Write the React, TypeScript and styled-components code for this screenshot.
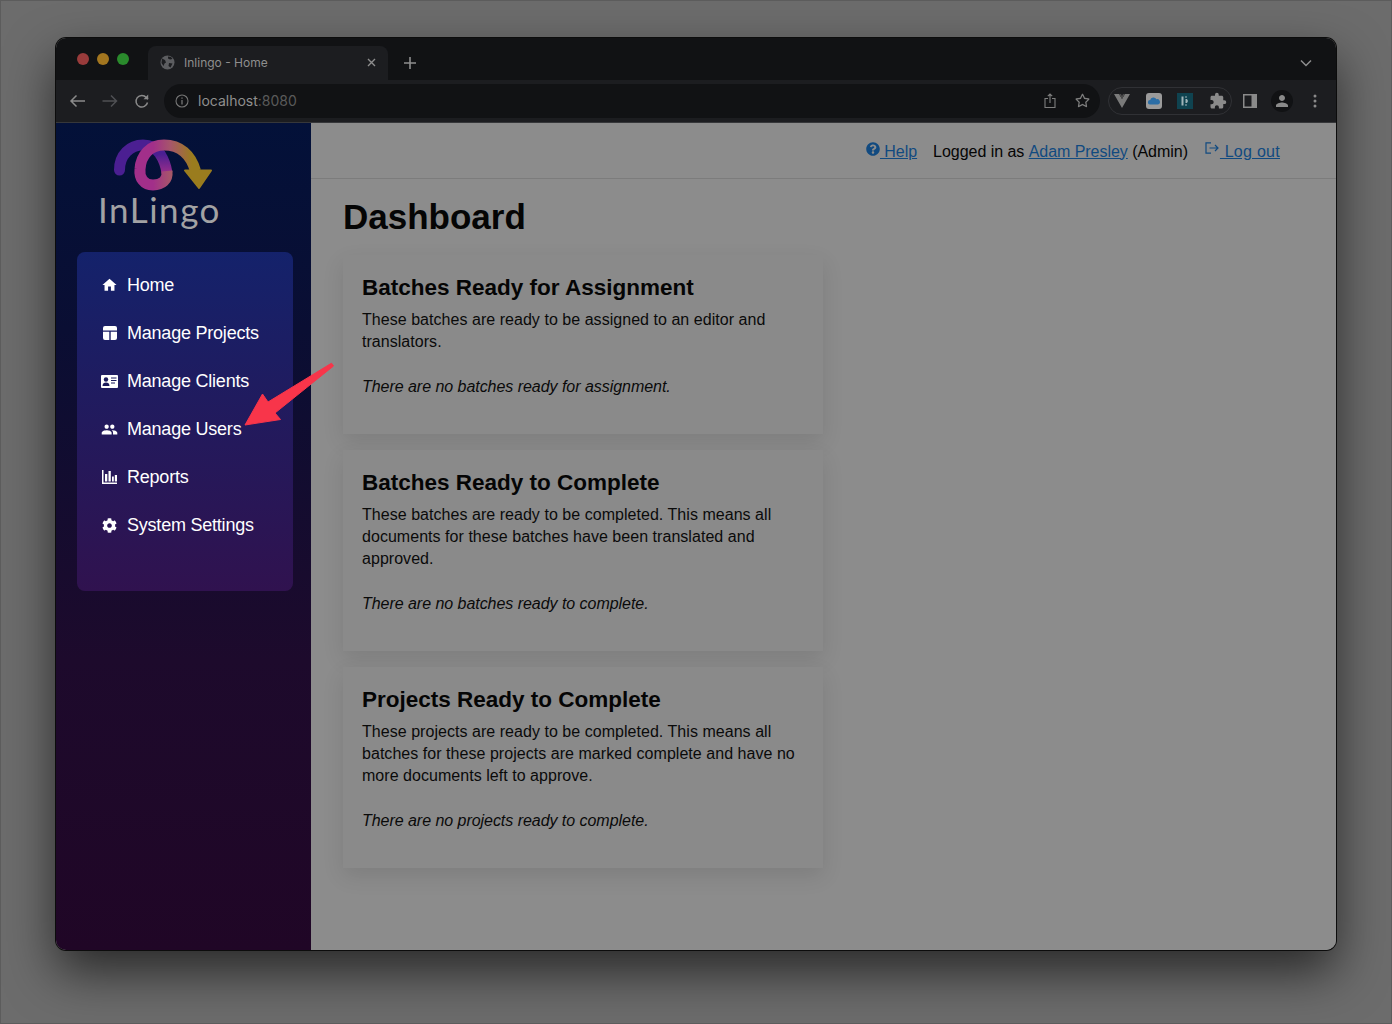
import React, { FC } from 'react';
import styled, { createGlobalStyle } from 'styled-components';
import { MdHome, MdPeople, MdExtension, MdPerson } from 'react-icons/md';
import { FaCog, FaQuestionCircle, FaRegStar } from 'react-icons/fa';

const GlobalStyle = createGlobalStyle`
  html, body { margin: 0; padding: 0; }
  body { font-family: "Liberation Sans", Arial, sans-serif; background: #6c6c6c; }
`;

const Page = styled.div`
  box-sizing: border-box;
  width: 1392px;
  height: 1024px;
  padding: 38px 56px 0;
  background: #6c6c6c;
  border: 1px solid #5c5c5c;
  overflow: hidden;
`;

const Window = styled.div`
  position: relative;
  margin: -1px 0 0 -1px;
  width: 1280px;
  height: 912px;
  display: flex;
  flex-direction: column;
  border-radius: 10px;
  overflow: hidden;
  background: #8c8c8c;
  box-shadow: 0 0 0 1px #0c0c0c, 0 22px 50px rgba(0, 0, 0, 0.62);
`;

const TabStrip = styled.div`
  height: 42px;
  flex: none;
  display: flex;
  align-items: flex-end;
  background: #111214;
`;

const Lights = styled.div`
  display: flex;
  gap: 8px;
  align-self: flex-start;
  margin: 15px 19px 0 21px;
`;

const Light = styled.span<{ $color: string }>`
  width: 12px;
  height: 12px;
  border-radius: 50%;
  background: ${p => p.$color};
`;

const Tab = styled.div`
  box-sizing: border-box;
  width: 240px;
  height: 34px;
  display: flex;
  align-items: center;
  padding: 0 12px 2px 12px;
  background: #1c1d20;
  border-radius: 8px 8px 0 0;
  color: #8e8e8e;
  font: 12px "Inter", "Liberation Sans", sans-serif;
`;

const TabTitle = styled.span`
  flex: 1;
  margin-left: 9px;
`;

const NewTab = styled.svg`
  margin: 0 0 10px 15px;
`;

const StripEnd = styled.svg`
  margin: 0 24px 13px auto;
`;

const Toolbar = styled.div`
  box-sizing: border-box;
  height: 43px;
  flex: none;
  display: flex;
  align-items: center;
  padding: 0 0 1px 13px;
  background: #1c1d20;
  border-bottom: 1px solid #36373a;
`;

const NavIcon = styled.svg<{ $left?: number; $right?: number }>`
  flex: none;
  margin-left: ${p => p.$left ?? 0}px;
  margin-right: ${p => p.$right ?? 10}px;
`;

const AddressBar = styled.div`
  box-sizing: border-box;
  width: 936px;
  height: 34px;
  margin-left: 2px;
  display: flex;
  align-items: center;
  padding: 0 10px 0 11px;
  border-radius: 17px;
  background: #111214;
  font: 14px "Inter", "Liberation Sans", sans-serif;
  color: #8f8f8f;
`;

const Url = styled.span`
  margin-left: 9px;
  flex: 1;
  span { color: #5a5a5a; }
`;

const BarIcons = styled.div`
  display: flex;
  align-items: center;
  gap: 19px;
  color: #7e7e7e;
`;

const ExtensionPill = styled.div`
  box-sizing: border-box;
  width: 124px;
  height: 28px;
  margin-left: 8px;
  display: flex;
  align-items: center;
  justify-content: space-between;
  padding: 0 4px 0 5px;
  border: 1px solid #303135;
  border-radius: 14px;
  color: #8a8a8a;
`;

const ToolbarEnd = styled.div`
  display: flex;
  align-items: center;
  margin-left: 11px;
  color: #8a8a8a;
`;

const Avatar = styled.span`
  width: 22px;
  height: 22px;
  margin: 0 20px 0 14px;
  display: flex;
  align-items: center;
  justify-content: center;
  border-radius: 50%;
  background: #111214;
`;

const Body = styled.div`
  flex: 1;
  display: flex;
  min-height: 0;
`;

const Sidebar = styled.aside`
  width: 255px;
  flex: none;
  padding-top: 14px;
  box-sizing: border-box;
  background: linear-gradient(180deg, #031139 0%, #0a0e33 25%, #1d0a2c 65%, #200626 100%);
`;

const Logo = styled.div`
  height: 115px;
  display: flex;
  flex-direction: column;
  margin-left: 43px;
`;

const LogoMark = styled.svg`
  margin-left: 9px;
  flex: none;
`;

const LogoText = styled.span`
  margin: -1px 0 0 -1px;
  font: 400 35px/38px "Lato", "Noto Sans", sans-serif;
  letter-spacing: 1.5px;
  color: #a2a2a4;
`;

const NavCard = styled.nav`
  margin: 0 18px 0 21px;
  padding: 9px 0 42px;
  border-radius: 8px;
  background: linear-gradient(180deg, #14226b 0%, #30124f 100%);
`;

const NavItem = styled.div`
  height: 48px;
  display: flex;
  align-items: center;
  padding-left: 24px;
  color: #fff;
  font-size: 18px;
  letter-spacing: -0.22px;
`;

const NavGlyph = styled.span`
  width: 17px;
  height: 17px;
  margin-right: 9px;
  display: flex;
  align-items: center;
  justify-content: center;
`;

const Content = styled.main`
  flex: 1;
  min-width: 0;
  background: #8c8c8c;
`;

const TopBar = styled.header`
  box-sizing: border-box;
  height: 56px;
  display: flex;
  align-items: center;
  justify-content: flex-end;
  padding: 2px 56px 0 0;
  border-bottom: 1px solid #7c7c7c;
  font-size: 16px;
  letter-spacing: -0.04px;
  color: #050505;
`;

const TopLink = styled.a`
  color: #114a80;
  text-decoration: underline;
`;

const LogoutLink = styled(TopLink)`
  letter-spacing: 0.28px;
`;

const TopGroup = styled.span<{ $gap?: number }>`
  margin-left: ${p => p.$gap ?? 0}px;
  display: inline-flex;
  align-items: center;
  white-space: pre;
`;

const TopIcon = styled.span`
  display: inline-flex;
  color: #114a80;
  margin-top: -6px;
`;

const Inner = styled.div`
  padding: 16px 0 0 32px;
`;

const PageTitle = styled.h1`
  margin: 0 0 15.5px;
  font-size: 35px;
  line-height: 44px;
  font-weight: 700;
  color: #050505;
`;

const CardStack = styled.div`
  width: 480px;
  display: flex;
  flex-direction: column;
  gap: 16px;
`;

const Card = styled.section`
  padding: 19px 19px 36px;
  background: #8a8a8a;
  box-shadow: 0 8px 20px rgba(0, 0, 0, 0.1);
  color: #0a0a0a;
`;

const CardTitle = styled.h2`
  margin: 0 0 7px;
  font-size: 22.5px;
  line-height: 28px;
  font-weight: 700;
  color: #050505;
`;

const CardText = styled.p<{ $empty?: boolean }>`
  margin: ${p => (p.$empty ? '23px 0 0' : '0')};
  font-size: 16px;
  line-height: 22px;
  letter-spacing: ${p => (p.$empty ? '-0.04px' : '0.04px')};
  font-style: ${p => (p.$empty ? 'italic' : 'normal')};
`;

const Pointer = styled.svg`
  position: absolute;
  left: 0;
  top: 0;
  pointer-events: none;
`;

const ProjectsIcon: FC = () => (
  <svg width="14" height="14" viewBox="0 0 14 14" fill="#fff">
    <path d="M2 0h10a2 2 0 0 1 2 2v2.500H0V2a2 2 0 0 1 2-2zM0 5.700h6.300V14H2a2 2 0 0 1-2-2zM7.700 5.700H14V12a2 2 0 0 1-2 2H7.700z" />
  </svg>
);

const ClientsIcon: FC = () => (
  <svg width="17" height="13" viewBox="0 0 17 13">
    <rect width="17" height="13" rx="1" fill="#fff" />
    <circle cx="5" cy="4.500" r="2.200" fill="#1b1a5c" />
    <path d="M1.500 11c0-2.500 1.500-3.500 3.500-3.500S8.500 8.500 8.500 11z" fill="#1b1a5c" />
    <path d="M10 3h5.500M10 5.500h5.500M10 8h4" stroke="#1b1a5c" strokeWidth="1" />
  </svg>
);

const ReportsIcon: FC = () => (
  <svg width="15" height="14" viewBox="0 0 15 14" fill="#fff">
    <path d="M0 0h1.500v12.500H15V14H0zM3 4h2.300v7.500H3zM6.500 1h2.300v10.500H6.500zM10 6.500h1.800v5H10zM12.800 5H15v6.500h-2.200z" />
  </svg>
);

const LogoutIcon: FC = () => (
  <svg width="15" height="13" viewBox="0 0 15 13" fill="none" stroke="#114a80" strokeWidth="1.200">
    <path d="M6 0.800H1v10.400h5M4.500 6h8.500M10 3l3 3-3 3" />
  </svg>
);

const navItems = [
  { label: 'Home', icon: <MdHome size={18} /> },
  { label: 'Manage Projects', icon: <ProjectsIcon /> },
  { label: 'Manage Clients', icon: <ClientsIcon /> },
  { label: 'Manage Users', icon: <MdPeople size={17} /> },
  { label: 'Reports', icon: <ReportsIcon /> },
  { label: 'System Settings', icon: <FaCog size={15} /> },
];

const cards = [
  {
    title: 'Batches Ready for Assignment',
    text: 'These batches are ready to be assigned to an editor and translators.',
    empty: 'There are no batches ready for assignment.',
  },
  {
    title: 'Batches Ready to Complete',
    text: 'These batches are ready to be completed. This means all documents for these batches have been translated and approved.',
    empty: 'There are no batches ready to complete.',
  },
  {
    title: 'Projects Ready to Complete',
    text: 'These projects are ready to be completed. This means all batches for these projects are marked complete and have no more documents left to approve.',
    empty: 'There are no projects ready to complete.',
  },
];

const App: FC = () => (
  <Page>
    <GlobalStyle />
    <Window>
      <TabStrip>
        <Lights>
          <Light $color="#993b3b" />
          <Light $color="#a3761f" />
          <Light $color="#2a8a2c" />
        </Lights>
        <Tab>
          <svg width="15" height="15" viewBox="0 0 15 15">
            <circle cx="7.500" cy="7.500" r="7" fill="#5c5d60" />
            <path d="M2 3.500l3 1.500 1 2.500-1.500 1-1 2.500-2-3zM8 1.500l3 .5 1.500 2-2.500.5-2-1zM9 8l3.500.5-2 4-2-1.500z" fill="#1c1d20" />
          </svg>
          <TabTitle>Inlingo - Home</TabTitle>
          <svg width="9" height="9" viewBox="0 0 9 9" stroke="#8e8e8e" strokeWidth="1.400">
            <path d="M1 1l7 7M8 1l-7 7" />
          </svg>
        </Tab>
        <NewTab width="14" height="14" viewBox="0 0 14 14" stroke="#8e8e8e" strokeWidth="1.600">
          <path d="M7 1v12M1 7h12" />
        </NewTab>
        <StripEnd width="12" height="8" viewBox="0 0 12 8" fill="none" stroke="#8e8e8e" strokeWidth="1.500">
          <path d="M1 1.500l5 5 5-5" />
        </StripEnd>
      </TabStrip>
      <Toolbar>
        <NavIcon width="17" height="14" viewBox="0 0 17 14" fill="none" stroke="#8a8a8a" strokeWidth="1.500">
          <path d="M16 7H2M7.500 1.500L2 7l5.500 5.500" />
        </NavIcon>
        <NavIcon width="18" height="14" viewBox="0 0 17 14" fill="none" stroke="#4f5053" strokeWidth="1.500" $left={5}>
          <path d="M1 7h14M9.500 1.500L15 7l-5.500 5.500" />
        </NavIcon>
        <NavIcon width="16" height="16" viewBox="0 0 16 16" fill="none" stroke="#8a8a8a" strokeWidth="1.500" $left={5} $right={12}>
          <path d="M13.500 9.500a5.800 5.800 0 1 1-1.200-5l1.700 1.800" />
          <path d="M14.200 1.500v4.800H9.500" fill="#8a8a8a" strokeWidth="0" />
        </NavIcon>
        <AddressBar>
          <svg width="14" height="14" viewBox="0 0 14 14" fill="none" stroke="#757575" strokeWidth="1.100">
            <circle cx="7" cy="7" r="6" />
            <path d="M7 6v4.500M7 3.500v1.300" strokeWidth="1.300" />
          </svg>
          <Url>localhost<span>:8080</span></Url>
          <BarIcons>
            <svg width="12" height="15" viewBox="0 0 12 15" fill="none" stroke="#7e7e7e" strokeWidth="1.100">
              <path d="M4 5.500H1v9h10v-9H8M6 10V1M3.800 3.200L6 1l2.200 2.200" />
            </svg>
            <FaRegStar size={15} />
          </BarIcons>
        </AddressBar>
        <ExtensionPill>
          <svg width="16" height="14" viewBox="0 0 16 14">
            <path d="M0 0h5l3 5 3-5h5L8 14z" fill="#7a7a7a" />
            <path d="M5 0l3 5 3-5h-2L8 2 7 0z" fill="#4d4d4d" />
          </svg>
          <svg width="16" height="16" viewBox="0 0 16 16">
            <rect width="16" height="16" rx="3" fill="#9b9b9b" />
            <path d="M4 11.500a2.200 2.200 0 0 1 .2-4.400 3.300 3.300 0 0 1 6.200-.8 2.700 2.700 0 0 1 1.600 5.200z" fill="#2c6ea6" />
          </svg>
          <svg width="16" height="16" viewBox="0 0 16 16">
            <rect width="16" height="16" fill="#0f4350" />
            <path d="M4.500 3.500h2v9h-2zM8.500 3h1v2h-1zM8.500 6h1.500l1 2-1 2H8.500zM8.500 11h1v2h-1z" fill="#a0b4b8" />
          </svg>
          <MdExtension size={18} />
        </ExtensionPill>
        <ToolbarEnd>
          <svg width="14" height="14" viewBox="0 0 14 14" fill="#8a8a8a">
            <path d="M0 0h14v14H0zM1.500 1.500v11h7v-11z" fillRule="evenodd" />
          </svg>
          <Avatar><MdPerson size={18} /></Avatar>
          <svg width="4" height="14" viewBox="0 0 4 14" fill="#8a8a8a">
            <circle cx="2" cy="2" r="1.500" />
            <circle cx="2" cy="7" r="1.500" />
            <circle cx="2" cy="12" r="1.500" />
          </svg>
        </ToolbarEnd>
      </Toolbar>
      <Body>
        <Sidebar>
          <Logo>
            <LogoMark width="110" height="54" viewBox="0 0 110 54" fill="none">
              <defs>
                <linearGradient id="limbGrad" gradientUnits="userSpaceOnUse" x1="0" y1="17" x2="0" y2="38">
                  <stop offset="0" stopColor="#4b1f92" />
                  <stop offset="1" stopColor="#a22f8a" />
                </linearGradient>
                <linearGradient id="loopGrad" gradientUnits="userSpaceOnUse" x1="45" y1="0" x2="84" y2="0">
                  <stop offset="0" stopColor="#a22f8a" />
                  <stop offset="0.45" stopColor="#a6566a" />
                  <stop offset="1" stopColor="#9a7c1e" />
                </linearGradient>
              </defs>
              <path d="M11.500 33C11.500 18 22 8 35 8C43 8 48 11 52 17" stroke="#4b1f92" strokeWidth="11" strokeLinecap="round" />
              <path d="M52 17C56 23 58 29 59 36" stroke="url(#limbGrad)" strokeWidth="11" />
              <path d="M59 34C60 43 54 48 45 48C36 48 31 41 32 32C33 18 42 8 56 8C72 8 83 18 87.500 34" stroke="url(#loopGrad)" strokeWidth="11" />
              <path d="M77 33.500H103L91 51Z" fill="#9a7c1e" strokeLinejoin="round" stroke="#9a7c1e" strokeWidth="2" />
            </LogoMark>
            <LogoText>InLingo</LogoText>
          </Logo>
          <NavCard>
            {navItems.map(item => (
              <NavItem key={item.label}>
                <NavGlyph>{item.icon}</NavGlyph>
                {item.label}
              </NavItem>
            ))}
          </NavCard>
        </Sidebar>
        <Content>
          <TopBar>
            <TopGroup>
              <TopIcon><FaQuestionCircle size={14} /></TopIcon>
              <TopLink> Help</TopLink>
            </TopGroup>
            <TopGroup $gap={16}>
              Logged in as <TopLink>Adam Presley</TopLink> (Admin)
            </TopGroup>
            <TopGroup $gap={17}>
              <TopIcon><LogoutIcon /></TopIcon>
              <LogoutLink> Log out</LogoutLink>
            </TopGroup>
          </TopBar>
          <Inner>
            <PageTitle>Dashboard</PageTitle>
            <CardStack>
              {cards.map(card => (
                <Card key={card.title}>
                  <CardTitle>{card.title}</CardTitle>
                  <CardText>{card.text}</CardText>
                  <CardText $empty>{card.empty}</CardText>
                </Card>
              ))}
            </CardStack>
          </Inner>
        </Content>
      </Body>
      <Pointer width="1280" height="912" viewBox="0 0 1280 912">
        <g transform="translate(-56 -38)">
          <path d="M245 425L262.500 394L268 402L331.500 363.200L333.500 366L275 413L280.500 419.500Z" fill="#f8354a" stroke="#f8354a" strokeWidth="1" strokeLinejoin="round" />
        </g>
      </Pointer>
    </Window>
  </Page>
);

export default App;
